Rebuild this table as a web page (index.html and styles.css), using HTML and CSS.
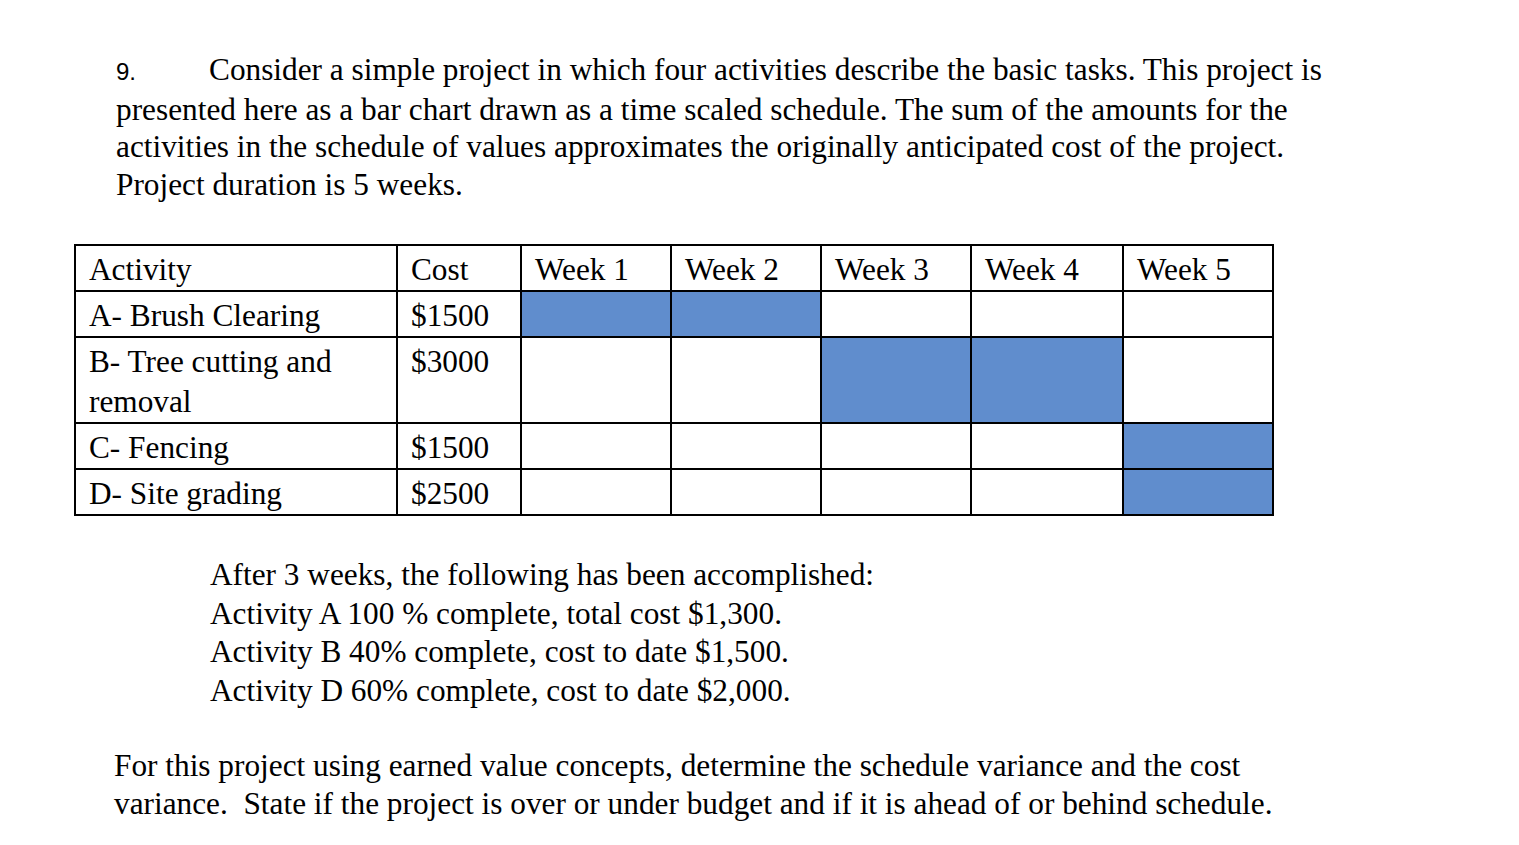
FILE: index.html
```html
<!DOCTYPE html>
<html>
<head>
<meta charset="utf-8">
<link rel="stylesheet" href="styles.css">
</head>
<body>
<div class="page">
  <p class="intro"><span class="num">9.</span>Consider a simple project in which four activities describe the basic tasks. This project is presented here as a bar chart drawn as a time scaled schedule. The sum of the amounts for the activities in the schedule of values approximates the originally anticipated cost of the project. Project duration is 5 weeks.</p>

  <table class="sched">
    <colgroup>
      <col class="c-act"><col class="c-cost"><col class="c-wk"><col class="c-wk"><col class="c-wk"><col class="c-wk4"><col class="c-wk">
    </colgroup>
    <tr class="r1"><td>Activity</td><td>Cost</td><td>Week 1</td><td>Week 2</td><td>Week 3</td><td>Week 4</td><td>Week 5</td></tr>
    <tr class="r1"><td>A- Brush Clearing</td><td>$1500</td><td class="on"></td><td class="on"></td><td></td><td></td><td></td></tr>
    <tr class="r2"><td>B- Tree cutting and<br>removal</td><td>$3000</td><td></td><td></td><td class="on"></td><td class="on"></td><td></td></tr>
    <tr class="r1"><td>C- Fencing</td><td>$1500</td><td></td><td></td><td></td><td></td><td class="on"></td></tr>
    <tr class="r1"><td>D- Site grading</td><td>$2500</td><td></td><td></td><td></td><td></td><td class="on"></td></tr>
  </table>

  <div class="progress">
    <p>After 3 weeks, the following has been accomplished:</p>
    <p>Activity A 100 % complete, total cost $1,300.</p>
    <p>Activity B 40% complete, cost to date $1,500.</p>
    <p>Activity D 60% complete, cost to date $2,000.</p>
  </div>

  <p class="question">For this project using earned value concepts, determine the schedule variance and the cost variance.&nbsp; State if the project is over or under budget and if it is ahead of or behind schedule.</p>
</div>
</body>
</html>
```

FILE: styles.css
```css
html, body {
  margin: 0;
  padding: 0;
  background: #ffffff;
}

.page {
  width: 1519px;
  height: 845px;
  padding-top: 51px;
  box-sizing: border-box;
  color: #000;
  font-family: "Liberation Serif", "Times New Roman", serif;
  overflow: hidden;
}

.intro {
  margin: 0 0 0 116px;
  width: 1220px;
  font-size: 31.3px;
  line-height: 37.5px;
}

.num {
  margin-right: 73px;
  font-family: "Liberation Sans", Arial, sans-serif;
  font-size: 24px;
}

.sched {
  margin: 41px 0 0 74px;
  border-collapse: collapse;
  table-layout: fixed;
  width: 1198px;
  font-size: 31.3px;
}

.c-act { width: 322px; }
.c-cost { width: 124px; }
.c-wk { width: 150px; }
.c-wk4 { width: 152px; }

.sched td {
  border: 2px solid #000;
  padding: 4px 0 0 13px;
  vertical-align: top;
  line-height: 40px;
  white-space: nowrap;
}

.sched tr.r1 td { height: 40px; }
.sched tr.r2 td { height: 80px; }

.sched td.on {
  background: #608dcd;
}

.progress {
  margin: 40px 0 0 210px;
  font-size: 31.3px;
  line-height: 38.5px;
}

.progress p {
  margin: 0;
}

.question {
  margin: 37px 0 0 114px;
  width: 1200px;
  font-size: 31.3px;
  line-height: 37.5px;
}
```
